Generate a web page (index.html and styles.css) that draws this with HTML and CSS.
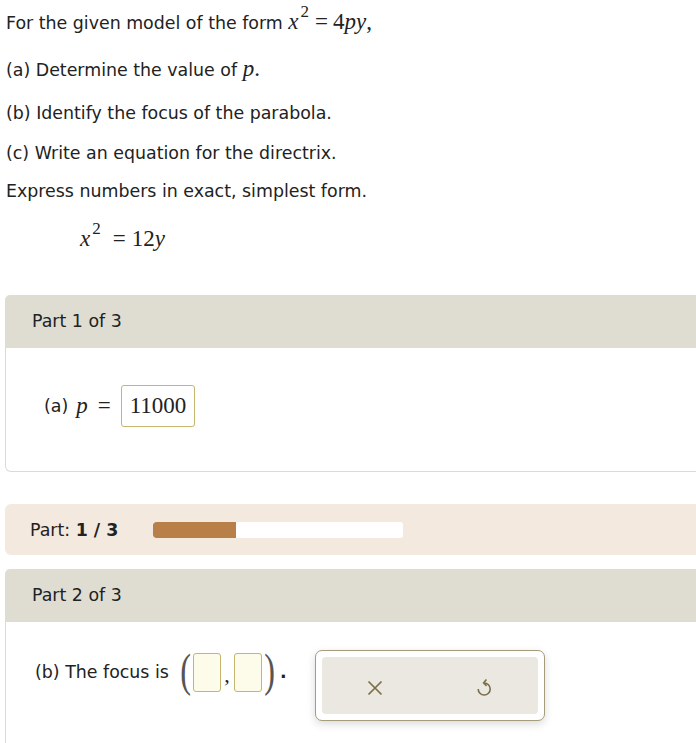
FILE: index.html
```html
<!DOCTYPE html>
<html>
<head>
<meta charset="utf-8">
<link rel="stylesheet" href="styles.css">
</head>
<body>
<div class="page">
  <div class="question">
    <p class="line first">For the given model of the form <span class="math"><i>x</i><sup>2</sup><span class="eq">=</span>4<i>py</i>,</span></p>
    <p class="line l2">(a) Determine the value of <span class="math"><i>p</i>.</span></p>
    <p class="line l3">(b) Identify the focus of the parabola.</p>
    <p class="line l4">(c) Write an equation for the directrix.</p>
    <p class="line l5">Express numbers in exact, simplest form.</p>
    <p class="given math"><i>x</i><sup>2</sup><span class="eq">=</span>12<i>y</i></p>
  </div>

  <section class="panel">
    <div class="panel-head">Part 1 of 3</div>
    <div class="panel-body one">
      <div class="answer-row">
        <span>(a)</span><span class="math"><i>p</i></span><span class="math eq2">=</span>
        <span class="answer-box">11000</span>
      </div>
    </div>
  </section>

  <div class="progress">
    <span class="progress-label">Part: <b>1 / 3</b></span>
    <span class="bar"><span class="fill" style="width:33.3%"></span></span>
  </div>

  <section class="panel second">
    <div class="panel-head">Part 2 of 3</div>
    <div class="panel-body two">
      <div class="focus-row">
        <div class="focus-group">
          <span class="focus-text">(b) The focus is</span>
          <span class="paren">(</span>
          <span class="blank"></span>
          <span class="comma">,</span>
          <span class="blank"></span>
          <span class="paren">)</span>
          <span class="dot">.</span>
        </div>
        <div class="tools">
          <div class="tools-inner">
            <svg class="icon" width="16" height="16" viewBox="0 0 16 16"><path d="M1.5 1.5 L14.5 14.5 M14.5 1.5 L1.5 14.5" stroke="#7a6e48" stroke-width="1.7" fill="none"/></svg>
            <svg class="icon undo" width="16" height="20" viewBox="0 0 16 20"><path d="M2.2 12 A6 6 0 1 0 8.2 6" stroke="#7a6e48" stroke-width="1.6" fill="none"/><path d="M10.4 2.6 L7.6 6 L10.6 8.8" stroke="#7a6e48" stroke-width="1.6" fill="none"/></svg>
          </div>
        </div>
      </div>
    </div>
  </section>
</div>
</body>
</html>
```

FILE: styles.css
```css
html, body {
  margin: 0;
  padding: 0;
  background: #fff;
  overflow: hidden;
}
body {
  font-family: "DejaVu Sans", Verdana, sans-serif;
  font-size: 17.4px;
  color: #222;
  width: 696px;
  height: 743px;
}
.page {
  width: 696px;
  overflow: hidden;
}
.question {
  padding-left: 6px;
}
.line {
  margin: 0;
  line-height: 20px;
}
.first { padding-top: 12px; }
.l2 { margin-top: 25px; }
.l3 { margin-top: 23px; }
.l4 { margin-top: 20px; }
.l5 { margin-top: 18px; }
.math {
  font-family: "Liberation Serif", "Times New Roman", serif;
  font-size: 23px;
}
.math i { font-style: italic; }
.math sup {
  font-size: 17px;
  vertical-align: 0;
  position: relative;
  top: -12px;
  margin-left: 2px;
}
.eq { margin: 0 5px 0 6px; }
.given {
  margin: 26px 0 0 74px;
  line-height: 24px;
}
.given .eq { margin: 0 6px 0 12px; }

.panel {
  margin: 42px 0 0 5px;
  width: 720px;
}
.panel-head {
  background: #dfddd1;
  height: 53px;
  line-height: 53px;
  padding-left: 27px;
  border-radius: 5px 5px 0 0;
}
.panel-body {
  border: 1px solid #dddad2;
  border-top: none;
  border-radius: 0 0 0 6px;
  background: #fff;
}
.panel-body.one {
  height: 124px;
  padding-left: 38px;
  box-sizing: border-box;
  padding-top: 37px;
}
.answer-row {
  display: flex;
  align-items: center;
}
.answer-row .math { margin-left: 8px; }
.answer-row .eq2 { margin-left: 10px; margin-right: 10px; }
.answer-box {
  font-family: "Liberation Serif", "Times New Roman", serif;
  font-size: 23px;
  border: 1.5px solid #c4b66e;
  border-radius: 3px;
  padding: 0 8px;
  height: 40px;
  line-height: 40px;
  background: #fff;
}

.progress {
  margin: 32px 0 0 5px;
  width: 720px;
  height: 51px;
  background: #f3e9de;
  border-radius: 6px;
  display: flex;
  align-items: center;
  padding-left: 25px;
  box-sizing: border-box;
}
.progress-label { width: 123px; }
.progress b { font-weight: bold; }
.bar {
  width: 250px;
  height: 16px;
  background: #fff;
  border-radius: 3px;
  overflow: hidden;
  display: block;
}
.fill {
  display: block;
  height: 100%;
  background: #b97f48;
  border-radius: 3px 0 0 3px;
}

.panel.second { margin-top: 14px; }
.panel-body.two {
  height: 140px;
  border-bottom: none;
  padding-left: 29px;
}
.focus-row {
  display: flex;
  align-items: flex-start;
  padding-top: 30px;
}
.focus-group {
  display: flex;
  align-items: center;
  height: 40px;
}
.focus-text { margin-right: 9px; }
.paren {
  font-family: "Liberation Serif", "Times New Roman", serif;
  font-size: 46px;
  color: #555;
  line-height: 40px;
  transform: scaleX(0.7);
  display: inline-block;
  margin-top: -3px;
}
.blank {
  width: 26px;
  height: 37px;
  border: 1.5px solid #c4b66e;
  border-radius: 3px;
  background: #fdfbea;
}
.comma {
  font-family: "Liberation Serif", serif;
  font-size: 22px;
  margin: 0 4px 0 3px;
  position: relative;
  top: 3px;
}
.dot { margin-left: 3px; font-weight: bold; }
.tools {
  margin-left: 28px;
  margin-top: -2px;
  width: 230px;
  height: 71px;
  box-sizing: border-box;
  border: 1px solid #a59c7c;
  border-radius: 7px;
  background: #fff;
  padding: 6px;
  box-shadow: 0 3px 8px rgba(0,0,0,0.15);
}
.tools-inner {
  height: 100%;
  background: #ebe8e1;
  border-radius: 4px;
  display: flex;
  align-items: center;
  padding-left: 45px;
  gap: 93px;
}
.icon { display: block; margin-top: 4px; }
.undo { margin-top: 2px; }
```
